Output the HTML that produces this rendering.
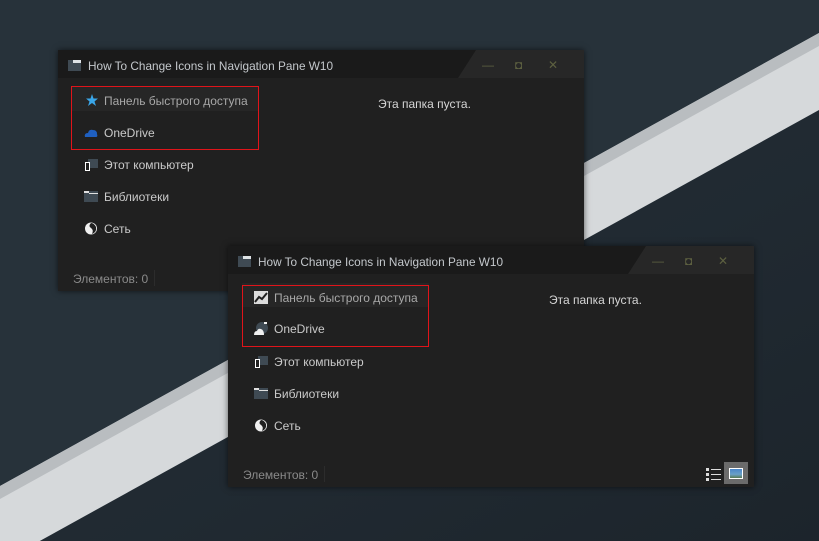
<!DOCTYPE html><html><head><meta charset="utf-8"><style>
*{margin:0;padding:0;box-sizing:border-box}
body{width:819px;height:541px;overflow:hidden;background:#27323a;position:relative;font-family:"Liberation Sans","DejaVu Sans",sans-serif;}
.bg{position:absolute;left:0;top:0}
.win{position:absolute;width:526px;height:241px;background:#202020;box-shadow:0 0 6px rgba(0,0,0,.6)}
.tb{position:absolute;left:0;top:0;width:526px;height:28px;background:#272727}
.tbl{position:absolute;left:0;top:0;width:418px;height:28px;background:#1a1a1a;clip-path:polygon(0 0,100% 0,calc(100% - 18px) 100%,0 100%)}
.title{position:absolute;left:30px;top:9px;font-size:11.8px;color:#c4c8cc}
.ficon{position:absolute;left:10px;top:10px;width:13px;height:11px;background:#3f4a53}
.ficon:before{content:"";position:absolute;left:5px;top:0;width:8px;height:3px;background:#dfe3e6}
.ctl{position:absolute;top:8px;color:#5d6040;font-size:12px}
.item{position:absolute;left:46px;font-size:12px;color:#cacaca}
.ic{position:absolute;left:26px;width:14px;height:13px}
.hl{position:absolute;left:14px;top:37px;width:187px;height:24px;background:#262626}
.red{position:absolute;border:1px solid #e0141a}
.empty{position:absolute;left:320px;top:47px;font-size:12px;color:#d6d6d6}
.status{position:absolute;left:15px;top:222px;font-size:12px;color:#8a8a8a}
.sep{position:absolute;left:96px;top:220px;width:1px;height:16px;background:#2c2c2c}
</style></head><body>
<svg class="bg" width="819" height="541">
<defs><linearGradient id="g" x1="0" y1="0" x2="1" y2="1"><stop offset="0" stop-color="#26313a"/><stop offset="1" stop-color="#1c242b"/></linearGradient>
<linearGradient id="s" x1="0" y1="0" x2="0.25" y2="0.45"><stop offset="0" stop-color="#b4b8bb"/><stop offset="1" stop-color="#d8dbdd"/></linearGradient></defs>
<polygon points="819,110 0,563 0,541 819,541" fill="url(#g)"/>
<polygon points="819,33 819,110 0,563 0,486" fill="#d6d9db"/>
<polygon points="819,33 819,46 0,499 0,486" fill="#b9bdc0"/>
</svg>

<div class="win" style="left:58px;top:50px">
<div class="tb"></div><div class="tbl"></div>
<div class="ficon"></div><div class="title">How To Change Icons in Navigation Pane W10</div>
<div class="ctl" style="left:424px">—</div><div class="ctl" style="left:457px">◘</div><div class="ctl" style="left:490px">✕</div>
<div class="hl"></div>
<svg class="ic" style="top:44px" viewBox="0 0 14 13"><polygon points="8,0 9.5,4.5 14,4.5 10.5,7.5 12,12 8,9 4,12 5.5,7.5 2,4.5 6.5,4.5" fill="#3aa6e8"/></svg>
<div class="item" style="top:44px;color:#a8a8a8">Панель быстрого доступа</div>
<svg class="ic" style="top:76px" viewBox="0 0 14 13"><path d="M1 11 Q0 7 4 7 Q5 3 9 4 Q13 4 13 8 Q14 11 12 11Z" fill="#1f5fbf"/></svg>
<div class="item" style="top:76px">OneDrive</div>
<svg class="ic" style="top:108px" viewBox="0 0 14 13"><rect x="4" y="1" width="10" height="9" fill="#3f4a53"/><rect x="1" y="4" width="5" height="9" fill="#fff"/><rect x="2" y="5" width="3" height="7" fill="#202020"/></svg>
<div class="item" style="top:108px">Этот компьютер</div>
<svg class="ic" style="top:140px" viewBox="0 0 14 13"><rect x="0" y="1" width="14" height="11" fill="#3f4a53"/><rect x="0" y="1" width="5" height="2" fill="#e0e0e0"/><rect x="5" y="3" width="9" height="1" fill="#e0e0e0"/></svg>
<div class="item" style="top:140px">Библиотеки</div>
<svg class="ic" style="top:172px" viewBox="0 0 14 13"><circle cx="7" cy="6.5" r="6" fill="#f0f0f0"/><path d="M7 1 Q4 4 7 6 Q10 8 8 12 Q13 10 12 5 Q10 1 7 1Z" fill="#202020"/></svg>
<div class="item" style="top:172px">Сеть</div>
<div class="red" style="left:13px;top:36px;width:188px;height:64px"></div>
<div class="empty">Эта папка пуста.</div>
<div class="status">Элементов: 0</div><div class="sep"></div>
</div>

<div class="win" style="left:228px;top:246px">
<div class="tb"></div><div class="tbl"></div>
<div class="ficon"></div><div class="title">How To Change Icons in Navigation Pane W10</div>
<div class="ctl" style="left:424px">—</div><div class="ctl" style="left:457px">◘</div><div class="ctl" style="left:490px">✕</div>
<div class="hl"></div>
<svg class="ic" style="top:45px" viewBox="0 0 14 13"><rect width="14" height="13" fill="#dcdcdc"/><polyline points="1,11 5,6 8,8 13,2" stroke="#202020" stroke-width="2" fill="none"/></svg>
<div class="item" style="top:45px;color:#a8a8a8">Панель быстрого доступа</div>
<svg class="ic" style="top:76px" viewBox="0 0 14 13"><circle cx="8" cy="6" r="6" fill="#3f4a53"/><path d="M0 13 Q0 9 3 9 Q4 6 7 7 Q10 8 10 13Z" fill="#f0f0f0"/><rect x="10" y="0" width="3" height="2" fill="#f0f0f0"/></svg>
<div class="item" style="top:76px">OneDrive</div>
<svg class="ic" style="top:109px" viewBox="0 0 14 13"><rect x="4" y="1" width="10" height="9" fill="#3f4a53"/><rect x="1" y="4" width="5" height="9" fill="#fff"/><rect x="2" y="5" width="3" height="7" fill="#202020"/></svg>
<div class="item" style="top:109px">Этот компьютер</div>
<svg class="ic" style="top:141px" viewBox="0 0 14 13"><rect x="0" y="1" width="14" height="11" fill="#3f4a53"/><rect x="0" y="1" width="5" height="2" fill="#e0e0e0"/><rect x="5" y="3" width="9" height="1" fill="#e0e0e0"/></svg>
<div class="item" style="top:141px">Библиотеки</div>
<svg class="ic" style="top:173px" viewBox="0 0 14 13"><circle cx="7" cy="6.5" r="6" fill="#f0f0f0"/><path d="M7 1 Q4 4 7 6 Q10 8 8 12 Q13 10 12 5 Q10 1 7 1Z" fill="#202020"/></svg>
<div class="item" style="top:173px">Сеть</div>
<div class="red" style="left:14px;top:39px;width:187px;height:62px"></div>
<div class="empty" style="left:321px">Эта папка пуста.</div>
<div class="status">Элементов: 0</div><div class="sep"></div>
<svg style="position:absolute;left:478px;top:221px" width="16" height="14"><g fill="#ddd"><rect x="0" y="1" width="3" height="3"/><rect x="0" y="6" width="3" height="3"/><rect x="0" y="11" width="3" height="3"/><rect x="5" y="2" width="10" height="1"/><rect x="5" y="7" width="10" height="1"/><rect x="5" y="12" width="10" height="1"/></g></svg>
<div style="position:absolute;left:496px;top:216px;width:24px;height:22px;background:#6b6b6b"></div>
<div style="position:absolute;left:501px;top:222px;width:14px;height:11px;background:#fff;border:1px solid #fff"><div style="width:12px;height:9px;background:linear-gradient(#4a86c8,#6aa0c8 60%,#5a7a50)"></div></div>
</div>
</body></html>
